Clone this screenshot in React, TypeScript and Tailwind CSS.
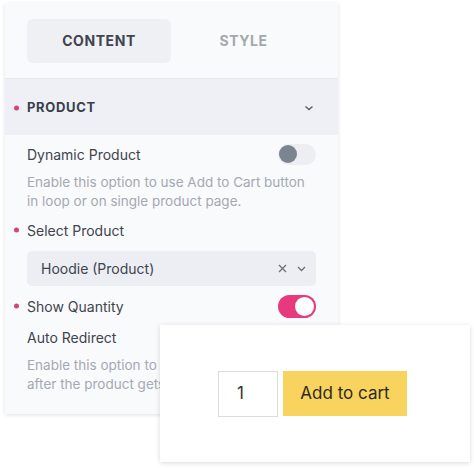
import React from "react";

function Dot() {
  return <span className="absolute left-[-13px] top-1/2 -translate-y-1/2 w-[5px] h-[5px] rounded-full bg-[#d9417a]" />;
}

export default function App() {
  return (
    <div className="relative w-[474px] h-[468px] bg-white overflow-hidden" style={{ fontFamily: "Inter, 'Noto Sans', sans-serif" }}>
      <div className="absolute left-[5px] top-[3px] w-[333px] h-[411px] bg-[#f9fafc] shadow-[0_1px_4px_rgba(0,0,0,0.12)] flex flex-col">
        <div className="flex h-[76px] items-center px-[22px] border-b border-[#e6e8ee]">
          <div className="w-[144px] h-[44px] rounded-[6px] bg-[#eef0f4] flex items-center justify-center text-[14px] font-bold tracking-[0.04em] text-[#3f444d]">CONTENT</div>
          <div className="flex-1 flex items-center justify-center text-[14px] font-bold tracking-[0.04em] text-[#a3a7ae]">STYLE</div>
        </div>
        <div className="h-[56px] bg-[#eef0f5] flex items-center justify-between pl-[22px] pr-[24px] pt-[2px]">
          <div className="relative text-[13px] font-bold tracking-[0.05em] text-[#3a3f48]"><Dot />PRODUCT</div>
          <svg width="10" height="6" viewBox="0 0 10 6" fill="none" stroke="#5b606a" strokeWidth="1.5"><path d="M1.5 1.5L5 4.5L8.5 1.5" /></svg>
        </div>
        <div className="flex flex-col px-[22px] pt-[8px]">
          <div className="flex items-center justify-between h-[22px]">
            <span className="text-[14px] text-[#3f444d]">Dynamic Product</span>
            <div className="w-[38px] h-[21px] rounded-full bg-[#eceef2] flex items-center">
              <div className="w-[18px] h-[18px] rounded-full bg-[#7b8491] ml-[1px]" />
            </div>
          </div>
          <p className="mt-[8px] text-[13.5px] leading-[19px] text-[#a4a9b1]">Enable this option to use Add to Cart button in loop or on single product page.</p>
          <div className="relative mt-[8px] text-[14px] text-[#3f444d] h-[22px] flex items-center"><Dot />Select Product</div>
          <div className="mt-[10px] h-[35px] rounded-[5px] bg-[#eceef3] flex items-center pl-[14px] pr-[10px]">
            <span className="flex-1 text-[14px] text-[#3f444d]">Hoodie (Product)</span>
            <svg width="9" height="9" viewBox="0 0 9 9" stroke="#6b7079" strokeWidth="1.3"><path d="M1 1L8 8M8 1L1 8" /></svg>
            <svg className="ml-[10px]" width="9" height="6" viewBox="0 0 9 6" fill="none" stroke="#6b7079" strokeWidth="1.3"><path d="M1 1L4.5 4.5L8 1" /></svg>
          </div>
          <div className="mt-[8px] flex items-center justify-between h-[24px]">
            <span className="relative text-[14px] text-[#3f444d]"><Dot />Show Quantity</span>
            <div className="w-[38px] h-[23px] rounded-full bg-[#e6397e] flex items-center justify-end">
              <div className="w-[19px] h-[19px] rounded-full bg-white mr-[2px]" />
            </div>
          </div>
          <div className="mt-[8px] h-[22px] flex items-center text-[14px] text-[#3f444d]">Auto Redirect</div>
          <p className="mt-[8px] text-[13.5px] leading-[19px] text-[#a4a9b1] whitespace-nowrap">Enable this option to redirect to cart page<br />after the product gets added to cart.</p>
        </div>
      </div>
      <div className="absolute left-[160px] top-[325px] w-[310px] h-[137px] bg-white shadow-[0_1px_5px_rgba(0,0,0,0.15)] flex items-center justify-center gap-[5px] pr-[5px]">
        <div className="w-[60px] h-[46px] border border-[#dcdde0] flex items-center pl-[18px] text-[17px] text-[#333]">1</div>
        <div className="w-[124px] h-[45px] bg-[#f8d35e] flex items-center justify-center text-[17px] text-[#2d2a22]">Add to cart</div>
      </div>
    </div>
  );
}
